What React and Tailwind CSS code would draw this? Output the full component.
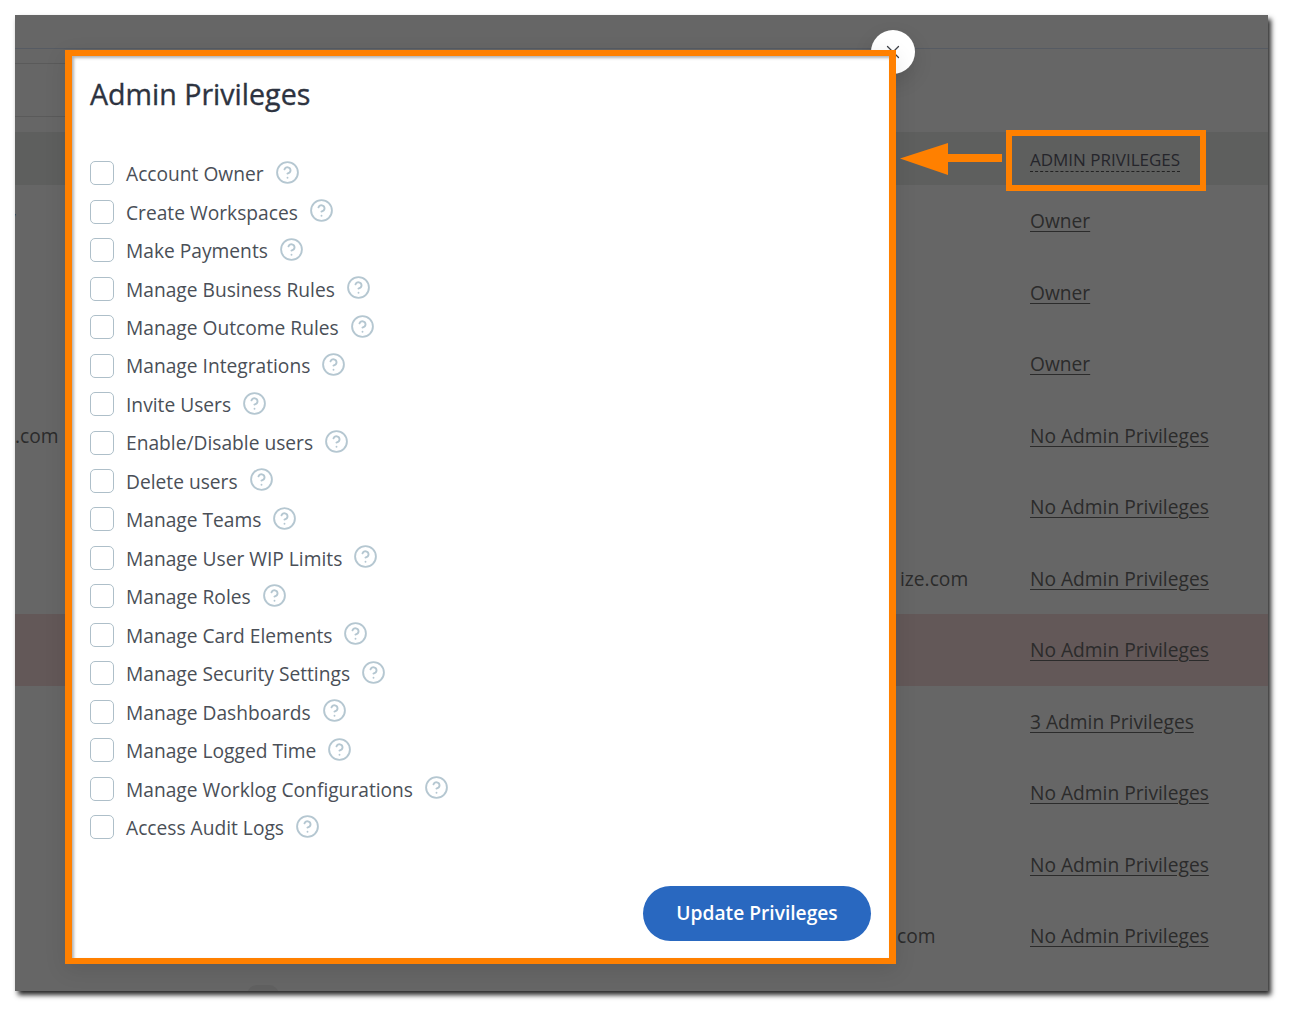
import { CircleHelp, X } from "lucide-react";

const PRIVILEGES = [
  "Account Owner",
  "Create Workspaces",
  "Make Payments",
  "Manage Business Rules",
  "Manage Outcome Rules",
  "Manage Integrations",
  "Invite Users",
  "Enable/Disable users",
  "Delete users",
  "Manage Teams",
  "Manage User WIP Limits",
  "Manage Roles",
  "Manage Card Elements",
  "Manage Security Settings",
  "Manage Dashboards",
  "Manage Logged Time",
  "Manage Worklog Configurations",
  "Access Audit Logs",
];

const ROWS = [
  { left: "y", leftClass: "-ml-[9px] mr-[9px] -mt-[6px]", link: "Owner" },
  { link: "Owner" },
  { link: "Owner" },
  { left: ".com", link: "No Admin Privileges" },
  { link: "No Admin Privileges" },
  { mid: "ize.com", link: "No Admin Privileges" },
  { link: "No Admin Privileges", red: true },
  { link: "3 Admin Privileges" },
  { link: "No Admin Privileges" },
  { link: "No Admin Privileges" },
  { mid: "com", midClass: "-ml-[3px] mr-[3px]", link: "No Admin Privileges" },
];

function PrivilegeRow({ label }) {
  return (
    <label className="flex h-[38.47px] items-center">
      <span className="h-6 w-6 shrink-0 rounded-[5px] border border-[#aebfc9] bg-white" />
      <span className="ml-3 mt-px text-[19.2px] leading-none text-[#4a4f57]">{label}</span>
      <CircleHelp size={25} strokeWidth={1.8} className="ml-[11px] -mt-0.5 text-[#b5c7d1]" />
    </label>
  );
}

function TableRow({ row }) {
  return (
    <div className={`flex h-[71.5px] items-center pt-[1.5px] text-[19.2px] text-[#2b2b2b] ${row.red ? "bg-[#635858]" : ""}`}>
      <span className={`w-[885px] shrink-0 ${row.leftClass || ""}`}>{row.left}</span>
      <span className={`w-[130px] shrink-0 ${row.midClass || ""}`}>{row.mid}</span>
      <a className="underline underline-offset-[3px]">{row.link}</a>
    </div>
  );
}

export default function App() {
  return (
    <div className="min-h-[1018px] bg-white pl-[15px] pt-[15px] font-['Open_Sans',sans-serif]">
      <div className="relative h-[976px] w-[1253px] overflow-hidden bg-[#666666]">
        {/* page behind the dialog */}
        <div className="h-[34px] border-b border-[#565b63]" />
        <div className="h-[15px] w-[100px] border-b border-[#5a5a5a]" />
        <div className="h-[53px] w-[100px] border-b border-[#5a5a5a]" />
        <div className="mt-[15px] flex h-[53px] items-center bg-[#5e5f5e] pl-[1015px] pt-1">
          <span className="border-b border-dashed border-[#222] text-[17px] leading-[22px] text-[#25252b]">
            ADMIN PRIVILEGES
          </span>
        </div>
        {ROWS.map((row, i) => (
          <TableRow key={i} row={row} />
        ))}
        <div className="absolute bottom-[-14px] left-[232px] h-5 w-8 rounded-full bg-[#606060]" />

        {/* close button sits under the orange outline */}
        <div className="absolute left-[856px] top-[15px] flex h-11 w-11 items-center justify-center rounded-full bg-white shadow-[0_8px_20px_rgba(0,0,0,0.12)]">
          <X size={22} strokeWidth={1.4} className="text-[#3d4048]" />
        </div>

        {/* dialog */}
        <div className="absolute left-[50px] top-[35px] flex h-[914px] w-[831px] flex-col border-x-[7px] border-y-[6px] border-x-[#ff8000] border-y-[#ff8000] bg-white pl-[18px] shadow-[inset_2px_2px_3px_rgba(0,0,0,0.3),0_6px_20px_rgba(0,0,0,0.1)]">
          <h2 className="mt-[19px] text-[28.6px] font-normal leading-[38px] text-[#2d3340] [-webkit-text-stroke:0.35px_#2d3340]">Admin Privileges</h2>
          <div className="mt-[41px]">
            {PRIVILEGES.map((p) => (
              <PrivilegeRow key={p} label={p} />
            ))}
          </div>
          <div className="mt-auto flex justify-end pb-[17px] pr-[18px]">
            <button className="h-[55px] w-[228px] rounded-full bg-[#2968c0] text-[19.2px] font-semibold text-white">
              Update Privileges
            </button>
          </div>
        </div>

        {/* annotation */}
        <div className="absolute left-[991px] top-[115px] h-[61px] w-[200px] border-[6px] border-[#ff8000]" />
        <svg className="absolute left-[885px] top-[128px]" width="103" height="33" viewBox="0 0 103 33">
          <path d="M0 15.5 L48 0 V11 H102 V19 H48 V32 Z" fill="#ff8000" />
        </svg>
      </div>
      <div className="pointer-events-none absolute left-[15px] top-[15px] h-[976px] w-[1253px] shadow-[3px_4px_5px_rgba(0,0,0,0.85)]" />
    </div>
  );
}
